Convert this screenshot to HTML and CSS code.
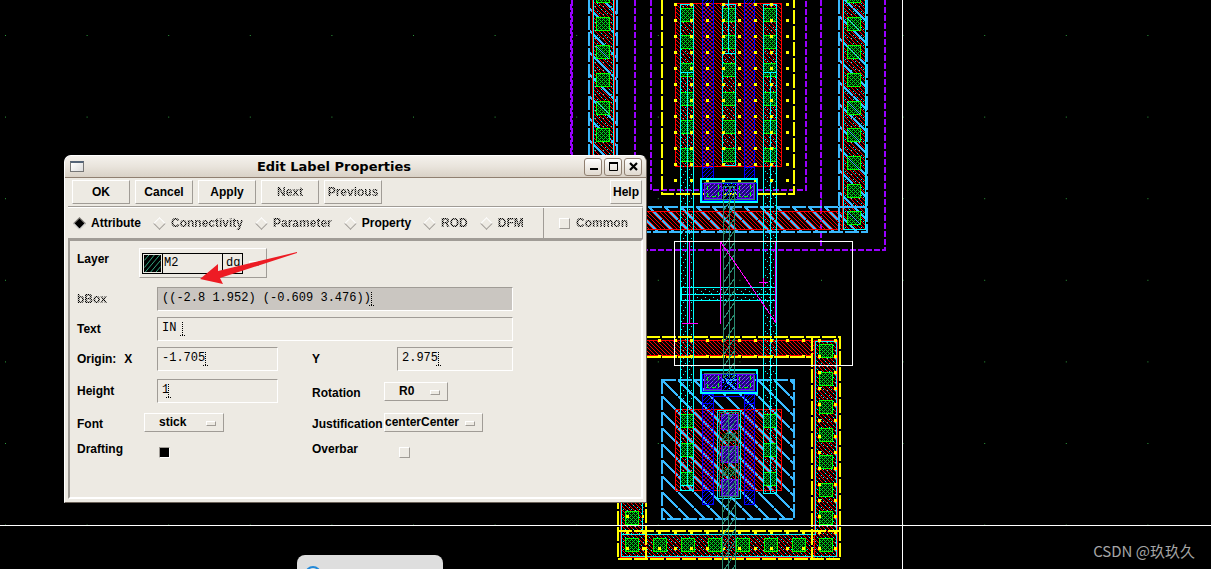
FILE: index.html
```html
<!DOCTYPE html>
<html lang="en">
<head>
<meta charset="utf-8">
<title>Edit Label Properties</title>
<link rel="stylesheet" href="styles.css">
</head>
<body>
<main class="desktop">
<svg class="layout" aria-hidden="true" shape-rendering="crispEdges">
  <defs>
    <pattern id="red" width="4" height="4" patternUnits="userSpaceOnUse"><path fill="#f00" d="M0 0h1v1h-1zM1 1h1v1h-1zM2 2h1v1h-1zM3 3h1v1h-1z"/></pattern>
    <pattern id="blue" width="4" height="4" patternUnits="userSpaceOnUse"><path fill="#00f" d="M3 0h1v1h-1zM2 1h1v1h-1zM1 2h1v1h-1zM0 3h1v1h-1z"/></pattern>
    <pattern id="cyan" width="8" height="8" patternUnits="userSpaceOnUse"><path fill="#0ff" d="M1 1h1v1h-1zM5 3h1v1h-1zM3 6h1v1h-1zM7 5h1v1h-1z"/></pattern>
    <pattern id="green" width="4" height="4" patternUnits="userSpaceOnUse"><path fill="#010" d="M0 0h4v4h-4z"/><path fill="#0d2" d="M0 0h1v1h-1zM2 0h1v1h-1zM1 1h1v1h-1zM0 2h1v1h-1zM2 2h1v1h-1zM3 3h1v1h-1z"/></pattern>
    <pattern id="violet" width="4" height="4" patternUnits="userSpaceOnUse"><path fill="#208" d="M0 0h4v4h-4z"/><path fill="#84f" d="M0 0h1v1h-1zM2 2h1v1h-1zM3 1h1v1h-1z"/><path fill="#284" d="M1 3h1v1h-1z"/></pattern>
    <pattern id="teal" width="8" height="12" patternUnits="userSpaceOnUse"><path d="M0 12L8 0" stroke="#2a8a70" fill="none"/></pattern>
    <pattern id="well" x="662" y="380" width="16" height="16" patternUnits="userSpaceOnUse"><path d="M-1 -1L17 17" stroke="#39b9ff" stroke-width="1.5" fill="none"/></pattern>
    <pattern id="ring" x="589" y="8" width="22" height="22" patternUnits="userSpaceOnUse"><path d="M-1 -1L23 23" stroke="#39b9ff" stroke-width="1.5" fill="none"/></pattern>
    <pattern id="dots" x="674" y="3" width="16" height="16" patternUnits="userSpaceOnUse"><path fill="#ff0" d="M0 0h3v3h-3z"/></pattern>
    <pattern id="grid" x="5" y="35" width="81.6" height="81.6" patternUnits="userSpaceOnUse"><path fill="#2b9a3a" d="M0 0h1v1h-1z"/></pattern>
    <g id="device">
      <path class="cyan" d="M1 1h56v23H1z"/><path class="tealbox" d="M4 4h50v17H4z"/>
      <path class="blue" d="M2 5h54v17H2z" fill="none"/>
      <path fill="url(#violet)" stroke="#6a00ff" d="M4.500 5.500h17v15h-17zM37.500 5.500h16v15h-16z"/>
      <path fill="url(#cyan)" d="M22 5h15v16H22z"/><path fill="url(#blue)" d="M22 5h15v16H22z"/>
      <path stroke="#0f0" stroke-dasharray="4 3" fill="none" d="M7.500 8v10h11V7M39.500 8v10h11V7"/>
    </g>
  </defs>
  <rect width="100%" height="100%" fill="url(#grid)"/>

  <g class="purple">
    <path d="M572 0V250H885V0"/><path d="M571 4V250" /><path d="M635 0V160M821 0V247"/><path d="M651 0V190H806V0"/>
  </g>

  <path fill="url(#red)" d="M675 3h107v164H675z"/>
  <path class="redline" d="M675.500 3.500h106v163h-106z"/>
  <path fill="url(#blue)" d="M702 0h12v178h-12zM744 0h11v178h-11z"/>
  <path class="blue" d="M702.500 -1v179h11V-1M744.500 -1v179h10V-1M702 167.500h12M744 167.500h11"/>

  <path fill="url(#red)" d="M593 0h21v160h-21zM843 0h22v230h-22zM646 211h198v19H646z"/>
  <path fill="url(#cyan)" d="M593 0h21v160h-21zM843 0h22v230h-22z"/>
  <path fill="url(#ring)" d="M590 0h27v160h-27zM840 0h27v231h-27z"/>
  <path fill="url(#well)" d="M646 207h194v24H646z"/>
  <path class="redline" d="M592.500 0V160M614.500 0V160M842.500 0V230M646 211.500H840M646 229.500H840"/>
  <path class="cyan thin" d="M593.500 0V160M613.500 0V160M843.500 0V229.500H865.500V0"/>
  <path class="sky" d="M589 0V160M617 0V160M839 0V207H646M867 0V232H646M839 207V232M839 207H867"/>

  <path fill="url(#red)" d="M675 409h107v82H675zM646 340h168v16H646zM815 341h22v217h-22zM620 500h24v57h-24zM620 535h218v22H620z"/>
  <path fill="url(#cyan)" d="M816 341h21v216h-21zM621 500h22v57h-22zM621 535h216v22H621z"/>
  <path fill="url(#well)" d="M662 380h132v139H662z"/>
  <path class="redline" d="M675.500 409.500h106v81h-106zM646 340.500H812M646 355.500H812M814.500 557V340.500H837.500V557M620.500 500V557H815"/>
  <path class="cyan thin" d="M815.500 534V341.500H836.500V556.500H621.500V500M642.500 500V534.500H816M622 534.500H643"/>
  <path class="sky" d="M662 380H794V519H662Z"/>
  <path fill="url(#blue)" d="M702 394h12v110h-12zM744 394h11v110h-11z"/>
  <path class="blue" d="M702.500 394.500h11v110h-11zM744.500 394.500h10v110h-10zM714 396.500h30M702 403.500h12M744 403.500h11M702 490.500h12M744 490.500h11"/>

  <path fill="url(#cyan)" d="M681 4h13v487h-13zM764 4h13v490h-13zM723 4h13v161h-13zM681 288h95v13h-95z"/>
  <path class="contact" d="M680.500 8.500h13v13h-13zM680.500 35.500h13v13h-13zM680.500 63.500h13v13h-13zM680.500 92.500h13v13h-13zM680.500 120.500h13v13h-13zM680.500 148.500h13v13h-13zM722.500 8.500h13v13h-13zM722.500 35.500h13v13h-13zM722.500 63.500h13v13h-13zM722.500 92.500h13v13h-13zM722.500 120.500h13v13h-13zM722.500 148.500h13v13h-13zM763.500 8.500h13v13h-13zM763.500 35.500h13v13h-13zM763.500 63.500h13v13h-13zM763.500 92.500h13v13h-13zM763.500 120.500h13v13h-13zM763.500 148.500h13v13h-13z"/>
  <path class="contact" d="M596.500 -10.500h13v13h-13zM596.500 17.500h13v13h-13zM596.500 45.500h13v13h-13zM596.500 73.500h13v13h-13zM596.500 101.500h13v13h-13zM596.500 128.500h13v13h-13zM847.500 -10.500h13v13h-13zM847.500 17.500h13v13h-13zM847.500 45.500h13v13h-13zM847.500 73.500h13v13h-13zM847.500 101.500h13v13h-13zM847.500 128.500h13v13h-13zM847.500 156.500h13v13h-13zM847.500 184.500h13v13h-13zM847.500 211.500h13v13h-13z"/>
  <path class="contact" d="M680.500 414.500h13v13h-13zM680.500 443.500h13v13h-13zM680.500 472.500h13v13h-13zM763.500 414.500h13v13h-13zM763.500 443.500h13v13h-13zM763.500 472.500h13v13h-13z"/>
  <path class="contact" d="M819.500 344.500h13v13h-13zM819.500 372.500h13v13h-13zM819.500 400.500h13v13h-13zM819.500 428.500h13v13h-13zM819.500 455.500h13v13h-13zM819.500 483.500h13v13h-13zM819.500 511.500h13v13h-13zM819.500 538.500h13v13h-13zM625.500 511.500h13v13h-13zM625.500 538.500h13v13h-13zM653.500 538.500h13v13h-13zM681.500 538.500h13v13h-13zM708.500 538.500h13v13h-13zM736.500 538.500h13v13h-13zM764.500 538.500h13v13h-13zM792.500 538.500h13v13h-13z"/>
  <path stroke="#39b9ff" fill="none" d="M596 46l13 13M596 101l13 13M847 18l13 13M847 46l13 13M847 101l13 13M847 129l13 13M847 157l13 13M847 211l13 13"/>
  <path class="cyan thin" d="M680.500 490.500V4.500h13v486zM763.500 493.500V4.500h13v489zM722.500 4.500h13v161h-13zM687.500 72V485M770.500 72V493M680 72.500h13M763 72.500h13M728.500 0V53.500M722 53.500h13M681 287.500h95v13h-95zM681 294.500h95M680 485.500h13"/>

  <path fill="url(#dots)" d="M674 3h120v184H674zM646 339h168v4H646zM646 355h168v4H646zM816 339h22v220h-22zM620 515h24v44h-24zM620 531h196v4H620zM620 547h196v4H620z"/>
  <g class="yellow">
    <path d="M662 0V194H794V0"/><path d="M646 337H840V559H618V500M646 357H812M812 337V531H646V500M618 531H646M646 531V559M812 531V559M812 531H840"/>
  </g>

  <use href="#device" x="700" y="178"/>
  <use href="#device" x="700" y="369"/>
  <path class="cyan thin" d="M717.500 410.500h23v88h-23z"/><path class="tealbox" d="M719.500 412.500h19v84h-19z"/>
  <path fill="url(#cyan)" d="M722 412h14v84h-14z"/><path fill="url(#green)" d="M722 433h14v7h-14zM722 468h14v8h-14z" opacity=".5"/>
  <path fill="url(#violet)" stroke="#6a00ff" d="M721.500 414.500h16v15h-16zM721.500 446.500h16v16h-16zM721.500 479.500h16v16h-16z"/>
  <path fill="url(#teal)" d="M723 186h12v192h-12zM722 412h14v157h-14z"/>
  <path class="tealbox" d="M723.500 378V186.500h11V378M729.500 186V378M722.500 440V569M735.500 440V569M728.500 414V569M722 440.500h14"/>

  <g class="magenta">
    <path d="M682 241.500h16M682 323.500h16M689.500 241V323M720.500 241V324M775.500 241V323M759 282.500h9M763.500 278v9M720 241L776 323"/>
  </g>
  <path fill="none" stroke="#fff" d="M674.500 241.500h178v124h-178z"/>
  <line x1="0" x2="100%" y1="525.500" y2="525.500" stroke="#fff"/>
  <line x1="902.500" x2="902.500" y1="0" y2="100%" stroke="#fff"/>
</svg>

<form class="dialog" aria-label="Edit Label Properties">
  <header class="titlebar">
    <span class="sysmenu"></span>
    <h1 class="title">Edit Label Properties</h1>
    <div class="winbuttons">
      <button type="button" aria-label="Minimize"><svg viewBox="0 0 9 9"><path d="M1 7h8" stroke-width="2"/></svg></button>
      <button type="button" aria-label="Maximize"><svg viewBox="0 0 9 9"><path d="M.5 1v7.500h8V1"/><path d="M0 1h9" stroke-width="2"/></svg></button>
      <button type="button" aria-label="Close"><svg viewBox="0 0 9 9"><path d="M1 1l7 7M8 1L1 8" stroke-width="2.200"/></svg></button>
    </div>
  </header>
  <div class="actions">
    <button type="button" class="btn">OK</button>
    <button type="button" class="btn">Cancel</button>
    <button type="button" class="btn">Apply</button>
    <button type="button" class="btn" disabled><span class="dim">Next</span></button>
    <button type="button" class="btn" disabled><span class="dim">Previous</span></button>
    <button type="button" class="btn help">Help</button>
  </div>
  <div class="modes">
    <label class="mode"><input type="radio" name="mode" checked>Attribute</label>
    <label class="mode"><input type="radio" name="mode" disabled><span class="dim">Connectivity</span></label>
    <label class="mode"><input type="radio" name="mode" disabled><span class="dim">Parameter</span></label>
    <label class="mode"><input type="radio" name="mode">Property</label>
    <label class="mode"><input type="radio" name="mode" disabled><span class="dim">ROD</span></label>
    <label class="mode"><input type="radio" name="mode" disabled><span class="dim">DFM</span></label>
    <label class="common"><input type="checkbox" class="tick" disabled><span class="dim">Common</span></label>
  </div>
  <div class="panel">
    <div class="row layer-row">
      <label for="layer">Layer</label>
      <button type="button" id="layer" class="layer" aria-label="Layer M2 dg">
        <span class="cells">
          <svg class="swatch" viewBox="0 0 18 19"><path d="M0 6l5-6M0 14L11 0M1 19L17 0M7 19L18 6M13 19l5-6" stroke="#3cb890" fill="none"/></svg>
          <span class="name">M2</span><span class="purpose">dg</span>
        </span>
        <i class="pip"></i>
      </button>
    </div>
    <div class="row">
      <label for="bbox"><span class="dim">bBox</span></label>
      <div class="field wide"><input id="bbox" class="readonly" readonly value="((-2.8 1.952) (-0.609 3.476))"><i class="caret at29"></i></div>
    </div>
    <div class="row">
      <label for="text">Text</label>
      <div class="field wide"><input id="text" value="IN"><i class="caret at3"></i></div>
    </div>
    <div class="row">
      <label for="ox" class="origin"><span>Origin:</span><span>X</span></label>
      <div class="field"><input id="ox" value="-1.705"><i class="caret at6"></i></div>
      <label for="oy" class="second">Y</label>
      <div class="field short"><input id="oy" value="2.975"><i class="caret at5"></i></div>
    </div>
    <div class="row gap-above">
      <label for="height">Height</label>
      <div class="field"><input id="height" value="1"><i class="caret at1"></i></div>
      <label for="rotation" class="second low">Rotation</label>
      <div class="option small"><select id="rotation"><option>R0</option></select><i class="pip"></i></div>
    </div>
    <div class="row fonts">
      <label for="font" class="low">Font</label>
      <div class="option medium"><select id="font"><option>stick</option></select><i class="pip"></i></div>
      <label for="just" class="second low">Justification</label>
      <div class="option large"><select id="just"><option>centerCenter</option></select><i class="pip"></i></div>
    </div>
    <div class="row checks">
      <label for="drafting">Drafting</label>
      <div class="check"><input id="drafting" type="checkbox" class="tick" checked></div>
      <label for="overbar" class="second">Overbar</label>
      <div class="check"><input id="overbar" type="checkbox" class="tick"></div>
    </div>
  </div>
  <svg class="arrow" viewBox="0 0 100 34" aria-hidden="true"><path fill="#ed1c24" d="M0 28L18 13L18 20L97 1L97 2L20 27L23 33Z"/></svg>
</form>

<div class="toast"><span class="toast-icon"></span></div>
<p class="watermark" lang="zh">CSDN @玖玖久</p>
</main>
</body>
</html>
```
FILE: styles.css
```css
* { box-sizing: border-box; }
body { margin: 0; background: #000; }
.desktop {
  position: relative;
  height: 100vh;
  overflow: hidden;
  font: bold 12px/16px "Liberation Sans", Arial, sans-serif;
  color: #000;
}
.layout { position: absolute; inset: 0; width: 100%; height: 100%; }
.purple { stroke: #90f; stroke-width: 2; stroke-dasharray: 6 2; fill: none; }
.redline { stroke: #f00; fill: none; }
.blue { stroke: #00f; fill: none; }
.cyan { stroke: #0ff; stroke-width: 2; fill: none; }
.cyan.thin { stroke-width: 1; }
.sky { stroke: #39b9ff; stroke-width: 2; stroke-dasharray: 14 2; fill: none; }
.yellow { stroke: #ff0; stroke-width: 2; stroke-dasharray: 14 2; fill: none; }
.contact { fill: url(#green); stroke: #0f0; }
.tealbox { stroke: #2a8a70; fill: none; }
.magenta { stroke: #f0f; fill: none; }

button, input, select { font: inherit; color: inherit; margin: 0; padding: 0; border-radius: 0; }
.dialog {
  position: absolute;
  left: 64px;
  top: 155px;
  width: 583px;
  background: #edeae3;
  border: 1px solid #6b6259;
  border-top-color: #fff;
  border-left-color: #fff;
  border-radius: 7px 7px 0 0;
  padding: 0 3px 3px;
}
.titlebar {
  display: flex;
  align-items: center;
  height: 22px;
  margin: 0 -3px;
  padding: 0 4px 0 5px;
  border-bottom: 1px solid #8f7f70;
  border-radius: 6px 6px 0 0;
  background: linear-gradient(#f4f1ec, #e9e4dc 50%, #d9d1c6);
}
.sysmenu { width: 14px; height: 11px; border: 1px solid #777; border-top: 2px solid #546478; background: linear-gradient(135deg, #fff, #ddd); }
.title { flex: 1; margin: 0; text-align: center; font: bold 13px/20px "DejaVu Sans", sans-serif; }
.winbuttons { display: flex; gap: 2px; }
.winbuttons button {
  display: grid;
  place-items: center;
  width: 18px;
  height: 18px;
  border: 1px solid #8f7f70;
  border-radius: 3px;
  background: linear-gradient(#fff, #e0d9cf);
}
.winbuttons svg { width: 9px; height: 9px; stroke: #000; fill: none; }
.actions { display: flex; gap: 5px; padding: 2px 1px 2px 4px; border-bottom: 1px solid #a09c96; }
.btn {
  width: 58px;
  height: 24px;
  background: #edeae3;
  border: 1px solid;
  border-color: #fff #a09c96 #a09c96 #fff;
  white-space: nowrap;
}
.btn:disabled { color: inherit; }
.help { width: 32px; margin-left: auto; }
.dim {
  color: transparent;
  background: repeating-conic-gradient(#000 0 25%, #bbb8b2 0 50%) 0 0 / 2px 2px;
  background-clip: text;
  -webkit-background-clip: text;
}
.modes {
  display: flex;
  align-items: center;
  height: 32px;
  padding-left: 7px;
  border-top: 1px solid #fff;
  border-bottom: 1px solid #a09c96;
  border-right: 1px solid #a09c96;
}
.mode { display: flex; align-items: center; gap: 7px; margin-right: 14px; }
.mode input {
  appearance: none;
  width: 9px;
  height: 9px;
  border: 1px solid;
  border-color: #fff #a09c96 #a09c96 #fff;
  transform: rotate(45deg);
}
.mode input:checked { background: #000; border-color: #a09c96 #fff #fff #a09c96; }
.common { display: flex; align-items: center; gap: 6px; height: 100%; margin-left: auto; padding: 0 14px 0 15px; border-left: 1px solid #a09c96; }
.tick {
  appearance: none;
  width: 11px;
  height: 11px;
  border: 1px solid;
  border-color: #fff #a09c96 #a09c96 #fff;
}
.tick:checked { background: #000; border-color: #a09c96 #fff #fff #a09c96; }
.panel {
  display: flex;
  flex-direction: column;
  gap: 6px;
  min-height: 259px;
  padding: 7px 7px 36px;
  border: 2px solid;
  border-color: #a09c96 #fff #fff #a09c96;
}
.row { display: flex; align-items: center; min-height: 24px; }
.row > label { flex: none; width: 67px; white-space: nowrap; }
.row > label.second { width: 72px; }
.row > label.low { padding-top: 4px; }
.origin { display: flex; gap: 8px; }
.layer-row { align-items: flex-start; margin-bottom: 3px; }
.layer-row > label { width: 62px; padding-top: 3px; }
.layer {
  display: flex;
  align-items: center;
  gap: 6px;
  width: 128px;
  height: 30px;
  padding-left: 2px;
  background: none;
  border: 1px solid;
  border-color: #fff #a09c96 #a09c96 #fff;
}
.cells { display: flex; height: 21px; border: 1px solid #000; font: 12px/18px "Liberation Mono", monospace; text-align: left; }
.swatch { width: 19px; height: 19px; background: #000; border: 1px solid #edeae3; }
.name { width: 60px; border-left: 1px solid #000; padding-left: 1px; }
.purpose { width: 20px; height: 19px; padding-left: 3px; border-left: 1px solid #000; }
.pip { width: 10px; height: 5px; border: 1px solid; border-color: #fff #a09c96 #a09c96 #fff; }
.field { position: relative; width: 134px; padding-left: 13px; margin-right: 34px; }
.field.wide { width: 369px; }
.field.short { width: 129px; }
.field input {
  display: block;
  width: 100%;
  height: 24px;
  padding: 0 4px 2px;
  font: 12px/18px "Liberation Mono", monospace;
  background: #edeae3;
  border: 1px solid;
  border-color: #a09c96 #fff #fff #a09c96;
  outline: none;
}
.field input.readonly { background: #cac6c1; }
.caret { position: absolute; top: 5px; width: 5px; height: 14px; border-bottom: 1px dotted #000; background: repeating-linear-gradient(#000 0 1px, transparent 1px 2px) center / 1px 100% no-repeat; }
.at1 { left: 22px; }
.at3 { left: 36px; }
.at5 { left: 52px; }
.at6 { left: 59px; }
.at29 { left: 225px; }
.gap-above { margin-top: 2px; }
.fonts { margin-top: 1px; }
.option { position: relative; height: 19px; border: 1px solid; border-color: #fff #a09c96 #a09c96 #fff; }
.option select { display: block; width: 100%; height: 17px; appearance: none; border: 0; background: none; outline: none; }
.option .pip { position: absolute; right: 7px; top: 7px; pointer-events: none; }
.small { width: 64px; }
.small select { padding-left: 14px; }
.medium { width: 80px; margin-right: 88px; }
.medium select { padding-left: 14px; }
.large { width: 99px; }
.check { width: 168px; padding: 6px 0 0 15px; }
.check .tick { display: block; }
.checks { margin-top: -3px; }
.arrow { position: absolute; left: 135px; top: 95px; width: 100px; height: 34px; pointer-events: none; }
.toast { position: absolute; left: 297px; top: 555px; width: 146px; height: 40px; border-radius: 8px; background: #dedede; }
.toast-icon { position: absolute; left: 8px; top: 11px; width: 16px; height: 16px; border: 2px solid #2389d8; border-radius: 50%; }
.watermark { position: absolute; right: 16px; bottom: 8px; margin: 0; font: 15px/20px "Noto Sans CJK SC", sans-serif; color: #a5a5a5; }
```
